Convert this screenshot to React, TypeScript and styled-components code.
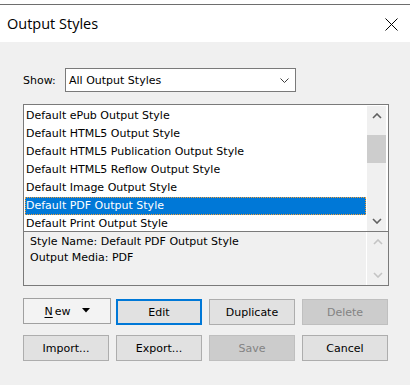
import React from "react";
import styled, { createGlobalStyle } from "styled-components";

const Global = createGlobalStyle`
  html, body { margin: 0; padding: 0; }
  body { width: 410px; height: 385px; overflow: hidden; background: #f0f0f0; }
  #root { width: 410px; height: 385px; }
`;

const UI_FONT = `"DejaVu Sans", "Liberation Sans", sans-serif`;

const Window = styled.div`
  width: 410px;
  height: 385px;
  background: #f0f0f0;
  display: flex;
  flex-direction: column;
  font-family: ${UI_FONT};
  font-size: 11px;
  color: #000;
`;

const TitleBar = styled.div`
  height: 37px;
  margin-top: 4px;
  border-top: 1px solid #6e6e6e;
  background: #fff;
  display: flex;
  align-items: center;
  justify-content: space-between;
  padding: 0 12px 0 7px;
  box-shadow: 0 -4px 0 #fff;
`;

const Title = styled.div`
  font-family: "Open Sans", "Noto Sans", sans-serif;
  font-size: 14.5px;
  color: #000;
  margin-top: -1px;
`;

const CloseIcon = styled.svg`
  width: 13px;
  height: 13px;
  margin-top: 1px;
`;

const Body = styled.div`
  display: flex;
  flex-direction: column;
  padding: 0 21px 0 23px;
`;

const ShowRow = styled.div`
  display: flex;
  align-items: center;
  margin-top: 26px;
  height: 24px;
`;

const Label = styled.span`
  width: 42px;
  padding-top: 1px;
`;

const Select = styled.div`
  box-sizing: border-box;
  width: 231px;
  height: 24px;
  border: 1px solid #7a7a7a;
  background: #fff;
  display: flex;
  align-items: center;
  justify-content: space-between;
  padding: 0 6px 0 3px;
`;

const ListBox = styled.div`
  box-sizing: border-box;
  margin-top: 12px;
  height: 128px;
  border: 1px solid #7a7a7a;
  background: #fff;
  padding: 1px 1px 0 1px;
  display: flex;
`;

const Items = styled.div`
  flex: 1;
  padding-top: 1px;
  overflow: hidden;
`;

const Item = styled.div<{ $selected?: boolean }>`
  box-sizing: border-box;
  height: 18px;
  line-height: 16px;
  padding-left: 0;
  white-space: nowrap;
  background: ${(p) => (p.$selected ? "#0078d7" : "transparent")};
  color: ${(p) => (p.$selected ? "#fff" : "#000")};
  border: 1px dotted ${(p) => (p.$selected ? "#f2a03a" : "transparent")};
`;

const ScrollBar = styled.div`
  width: 19px;
  margin-left: 1px;
  margin-right: 1px;
  background: #f0f0f0;
  display: flex;
  flex-direction: column;
`;

const ScrollButton = styled.div`
  height: 20px;
  display: flex;
  align-items: center;
  justify-content: center;
`;

const Track = styled.div`
  flex: 1;
  padding-top: 9px;
`;

const Thumb = styled.div`
  height: 28px;
  background: #cdcdcd;
`;

const DetailsBox = styled.div`
  box-sizing: border-box;
  height: 54px;
  border: 1px solid #7a7a7a;
  border-top: none;
  background: #f0f0f0;
  display: flex;
`;

const DetailsText = styled.div`
  flex: 1;
  padding: 2px 0 0 6px;
  line-height: 16px;
  border-right: 1px solid #fff;
`;

const ButtonGrid = styled.div`
  margin-top: 13px;
  display: grid;
  grid-template-columns: repeat(4, 86px);
  column-gap: 7px;
  row-gap: 10px;
`;

const Button = styled.div<{ $variant?: "normal" | "focus" | "disabled" | "menu" }>`
  box-sizing: border-box;
  height: 26px;
  display: flex;
  align-items: center;
  justify-content: center;
  background: ${(p) =>
    p.$variant === "disabled" ? "#cccccc" : p.$variant === "menu" ? "#f3f3f3" : "#e1e1e1"};
  border: ${(p) =>
    p.$variant === "focus"
      ? "2px solid #0078d7"
      : p.$variant === "disabled"
      ? "1px solid #bfbfbf"
      : p.$variant === "menu"
      ? "1px solid #a0a0a0"
      : "1px solid #adadad"};
  color: ${(p) => (p.$variant === "disabled" ? "#838383" : "#000")};
  ${(p) => (p.$variant === "menu" ? "margin: -1px -2px -1px 0;" : "")}
`;

const Accel = styled.span`
  text-decoration: underline;
  text-underline-offset: 2px;
  margin-right: 2px;
`;

const Caret = styled.svg`
  width: 8px;
  height: 5px;
  margin-left: 11px;
  margin-top: -2px;
`;

const Chevron = ({ dir, color }: { dir: "up" | "down"; color: string }) => (
  <svg width="10" height="6" viewBox="0 0 10 6">
    <path
      d={dir === "up" ? "M1 5 L5 1 L9 5" : "M1 1 L5 5 L9 1"}
      fill="none"
      stroke={color}
      strokeWidth="1.6"
    />
  </svg>
);

const items = [
  "Default ePub Output Style",
  "Default HTML5 Output Style",
  "Default HTML5 Publication Output Style",
  "Default HTML5 Reflow Output Style",
  "Default Image Output Style",
  "Default PDF Output Style",
  "Default Print Output Style",
];

export default function App() {
  return (
    <>
      <Global />
      <Window>
        <TitleBar>
          <Title>Output Styles</Title>
          <CloseIcon viewBox="0 0 13 13">
            <path d="M0.5 0.5 L12.5 12.5 M12.5 0.5 L0.5 12.5" stroke="#000" strokeWidth="1" fill="none" />
          </CloseIcon>
        </TitleBar>
        <Body>
          <ShowRow>
            <Label>Show:</Label>
            <Select>
              <span>All Output Styles</span>
              <svg width="9" height="5" viewBox="0 0 9 5">
                <path d="M0.5 0.5 L4.5 4.5 L8.5 0.5" fill="none" stroke="#3c3c3c" strokeWidth="1" />
              </svg>
            </Select>
          </ShowRow>
          <ListBox>
            <Items>
              {items.map((t, i) => (
                <Item key={t} $selected={i === 5}>
                  {t}
                </Item>
              ))}
            </Items>
            <ScrollBar>
              <ScrollButton>
                <Chevron dir="up" color="#606060" />
              </ScrollButton>
              <Track>
                <Thumb />
              </Track>
              <ScrollButton>
                <Chevron dir="down" color="#606060" />
              </ScrollButton>
            </ScrollBar>
          </ListBox>
          <DetailsBox>
            <DetailsText>
              <div>Style Name: Default PDF Output Style</div>
              <div>Output Media: PDF</div>
            </DetailsText>
            <ScrollBar>
              <ScrollButton>
                <Chevron dir="up" color="#c4c4c4" />
              </ScrollButton>
              <Track />
              <ScrollButton>
                <Chevron dir="down" color="#c4c4c4" />
              </ScrollButton>
            </ScrollBar>
          </DetailsBox>
          <ButtonGrid>
            <Button $variant="menu">
              <Accel>N</Accel>ew
              <Caret viewBox="0 0 8 5">
                <path d="M0 0 L8 0 L4 4.5 Z" fill="#000" />
              </Caret>
            </Button>
            <Button $variant="focus">Edit</Button>
            <Button>Duplicate</Button>
            <Button $variant="disabled">Delete</Button>
            <Button>Import...</Button>
            <Button>Export...</Button>
            <Button $variant="disabled">Save</Button>
            <Button>Cancel</Button>
          </ButtonGrid>
        </Body>
      </Window>
    </>
  );
}
